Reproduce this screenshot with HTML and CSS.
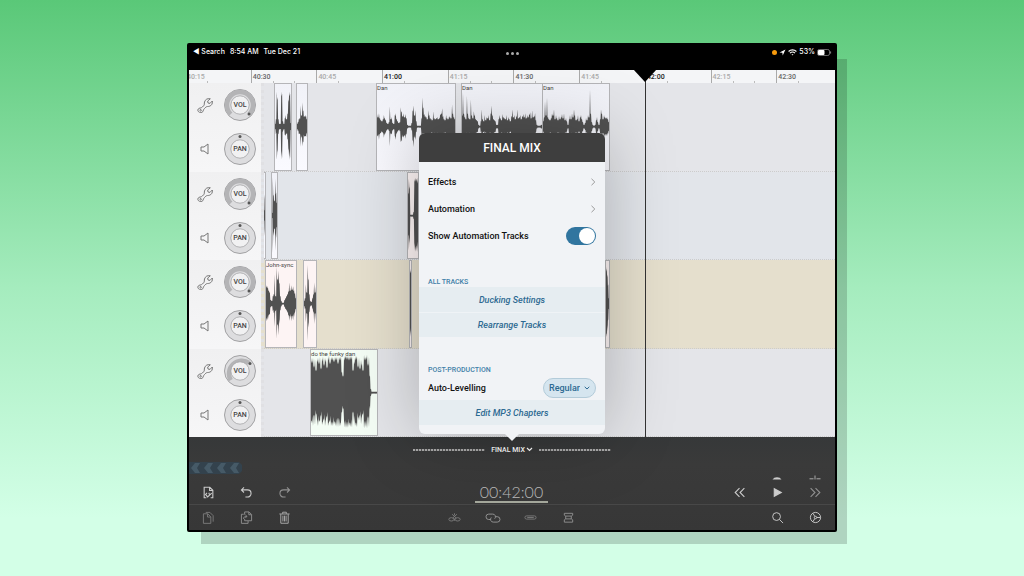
FILE: index.html
```html
<!DOCTYPE html>
<html lang="en">
<head>
<meta charset="utf-8">
<title>Final Mix</title>
<link rel="stylesheet" href="styles.css">
</head>
<body>
<svg class="sprite" aria-hidden="true">
  <symbol id="wrench" viewBox="0 0 16 16"><path d="M1.4 14.6c-1-1-.6-2.600.6-3.200 1.400-.7 2.200-.3 3.400-1.400l1.300-1.300c1-1.100.4-2.300.8-3.700C8.200 2.500 10.600 1 13.300 1.800l-2.600 2.200.3 2 2 .4 2.300-2.400c.6 2.400-.8 4.700-3 5.300-1.300.4-2.400-.1-3.500.9L7.500 11.500c-1.200 1.100-1 2.100-1.700 3.200-.9 1.200-3.200 1.100-4.400-.1zM3 13.700a.8.8 0 1 0 1-1.200.8.8 0 0 0-1 1.200z"/></symbol>
  <symbol id="speaker" viewBox="0 0 10 12"><path d="M1 4h3l4-3v10L4 8H1z"/></symbol>
  <symbol id="vol" viewBox="0 0 34 34"><circle cx="17" cy="17" r="15.500" fill="#dddddf" stroke="#a2a2a4"/><path d="M7.800 26.200A13 13 0 1 1 26.200 26.200" fill="none" stroke="#b4b4b6" stroke-width="4.500"/><circle cx="17" cy="17" r="9.200" fill="#f1f1f2" stroke="#a2a2a4" stroke-width=".8"/><circle cx="26" cy="26" r="1.500" fill="#555"/></symbol>
  <symbol id="volhigh" viewBox="0 0 34 34"><circle cx="17" cy="17" r="15.500" fill="#dddddf" stroke="#a2a2a4"/><path d="M7.800 26.200A13 13 0 0 1 26.200 8.800" fill="none" stroke="#b4b4b6" stroke-width="4.500"/><circle cx="17" cy="17" r="9.200" fill="#f1f1f2" stroke="#a2a2a4" stroke-width=".8"/><circle cx="27" cy="9.500" r="1.500" fill="#555"/></symbol>
  <symbol id="pan" viewBox="0 0 34 34"><circle cx="17" cy="17" r="15.500" fill="#dddddf" stroke="#a2a2a4"/><circle cx="17" cy="17" r="9.200" fill="#f1f1f2" stroke="#a2a2a4" stroke-width=".8"/><circle cx="17" cy="4.500" r="1.500" fill="#555"/></symbol>
  <symbol id="next" viewBox="0 0 6 8"><path d="M1.500.8 4.800 4 1.500 7.200"/></symbol>
</svg>

<main class="device">
  <header class="status">
    <div class="status-left"><span>◀ Search</span><span>8:54 AM</span><span>Tue Dec 21</span></div>
    <div class="dots"><i></i><i></i><i></i></div>
    <div class="status-right">
      <i class="mic"></i>
      <svg width="7" height="7" viewBox="0 0 7 7"><path d="M.5 3.500 6.500.5 3.700 6.500 3.400 3.800z" fill="#fff"/></svg>
      <svg width="9" height="7" viewBox="0 0 9 7" fill="none" stroke="#fff" stroke-width="1.100"><path d="M.6 2.500a5.600 5.600 0 0 1 7.800 0M2 4.200a3.600 3.600 0 0 1 5 0"/><path d="M3.500 5.200h2L4.500 6.400z" fill="#fff" stroke="none"/></svg>
      <span>53%</span>
      <svg width="15" height="7" viewBox="0 0 15 7"><rect x=".5" y=".5" width="12" height="6" rx="1.700" fill="none" stroke="#888" stroke-width=".8"/><rect x="1" y="1" width="6.500" height="5" rx="1" fill="#fff"/><path d="M13.600 2.400v2.200" stroke="#888"/></svg>
    </div>
  </header>

  <section class="editor">
    <ol class="ruler">
      <li class="light">40:15</li><li class="mid">40:30</li><li class="light">40:45</li><li class="dark">41:00</li><li class="light">41:15</li><li class="mid">41:30</li><li class="light">41:45</li><li class="dark">42:00</li><li class="light">42:15</li><li class="mid">42:30</li>
    </ol>
    <div class="tracks">
      <div class="track">
        <div class="strip">
          <button class="tool" aria-label="Track settings"><svg class="line wrench"><use href="#wrench"/></svg></button>
          <button class="knob"><svg><use href="#vol"/></svg><span>VOL</span></button>
          <button class="tool" aria-label="Mute"><svg class="line speaker"><use href="#speaker"/></svg></button>
          <button class="knob"><svg><use href="#pan"/></svg><span>PAN</span></button>
        </div>
        <div class="lane" data-track="0"></div>
      </div>
      <div class="track cool">
        <div class="strip">
          <button class="tool" aria-label="Track settings"><svg class="line wrench"><use href="#wrench"/></svg></button>
          <button class="knob"><svg><use href="#vol"/></svg><span>VOL</span></button>
          <button class="tool" aria-label="Mute"><svg class="line speaker"><use href="#speaker"/></svg></button>
          <button class="knob"><svg><use href="#pan"/></svg><span>PAN</span></button>
        </div>
        <div class="lane" data-track="1"></div>
      </div>
      <div class="track selected">
        <div class="strip">
          <button class="tool" aria-label="Track settings"><svg class="line wrench"><use href="#wrench"/></svg></button>
          <button class="knob"><svg><use href="#vol"/></svg><span>VOL</span></button>
          <button class="tool" aria-label="Mute"><svg class="line speaker"><use href="#speaker"/></svg></button>
          <button class="knob"><svg><use href="#pan"/></svg><span>PAN</span></button>
        </div>
        <div class="lane" data-track="2"></div>
      </div>
      <div class="track">
        <div class="strip">
          <button class="tool" aria-label="Track settings"><svg class="line wrench"><use href="#wrench"/></svg></button>
          <button class="knob"><svg><use href="#volhigh"/></svg><span>VOL</span></button>
          <button class="tool" aria-label="Mute"><svg class="line speaker"><use href="#speaker"/></svg></button>
          <button class="knob"><svg><use href="#pan"/></svg><span>PAN</span></button>
        </div>
        <div class="lane" data-track="3"></div>
      </div>
    </div>
    <div class="playhead"></div>

    <section class="popover" aria-label="Final mix settings">
      <h1>FINAL MIX</h1>
      <button class="row">Effects<svg class="next"><use href="#next"/></svg></button>
      <button class="row">Automation<svg class="next"><use href="#next"/></svg></button>
      <label class="row">Show Automation Tracks<input class="switch" type="checkbox" checked></label>
      <h2>ALL TRACKS</h2>
      <button class="action">Ducking Settings</button>
      <button class="action">Rearrange Tracks</button>
      <h2>POST-PRODUCTION</h2>
      <div class="row level"><label for="level">Auto-Levelling</label>
        <span class="pill"><select id="level"><option>Regular</option></select><svg width="6" height="4" viewBox="0 0 6 4"><path d="M.7.8 3 3 5.300.8" fill="none" stroke="#2d6a92"/></svg></span>
      </div>
      <button class="action">Edit MP3 Chapters</button>
    </section>
  </section>

  <footer class="console">
    <div class="mixbar">
      <i class="rail"></i>
      <button class="mixbtn">FINAL MIX<svg width="7" height="5" viewBox="0 0 7 5"><path d="M1 1l2.500 2.500L6 1" fill="none" stroke="#fff" stroke-width="1.200"/></svg></button>
      <i class="rail"></i>
    </div>
    <div class="overview">
      <svg width="54" height="12" viewBox="0 0 54 12"><path d="M0 0h50l3 3v6l-3 3H0z" fill="#33424d"/><g fill="#465a67"><path d="M6 1h5L8 6l3 5H6L2 6z"/><path d="M19 1h5l-3 5 3 5h-5l-4-5z"/><path d="M32 1h5l-3 5 3 5h-5l-4-5z"/><path d="M45 1h5l-3 5 3 5h-5l-4-5z"/></g></svg>
      <div class="peeks">
        <svg width="38" height="4" viewBox="0 0 38 4"><path d="M14.500 3.500a5 4 0 0 1 9 0z" fill="#ccc"/></svg>
        <svg width="38" height="5" viewBox="0 0 38 5"><path d="M13.500 3.800h4M19 .5v4M20.500 3.800h4" stroke="#aaa"/></svg>
      </div>
    </div>
    <div class="bar">
      <div class="group">
        <button class="icon" aria-label="Edit document"><svg viewBox="0 0 12 12"><path d="M4 10.800H2V1.200h5.200L10 4v6.800H8M7 1.400V4.200h2.800M4.600 6.300 3.300 7.800l1.900 2.300L9 6.600M6.300 6.200l.5 1.600"/></svg></button>
        <button class="icon" aria-label="Undo"><svg viewBox="0 0 12 12"><path d="M3.700 1.200 1.300 3.600 3.700 6M1.500 3.600h5.400a3.300 3.300 0 0 1 0 6.600H5"/></svg></button>
        <button class="icon dim" aria-label="Redo"><svg viewBox="0 0 12 12"><path d="M8.300 1.200l2.400 2.400L8.300 6M10.500 3.600H5.100a3.300 3.300 0 0 0 0 6.600H7"/></svg></button>
      </div>
      <output class="time">00:42:00</output>
      <div class="group">
        <button class="icon" aria-label="Rewind"><svg viewBox="0 0 12 12"><path d="M6 2 2 6l4 4M10.500 2l-4 4 4 4"/></svg></button>
        <button class="icon" aria-label="Play"><svg viewBox="0 0 12 12"><path d="M3 2.500v7L9.500 6z" fill="#ccc"/></svg></button>
        <button class="icon dim" aria-label="Forward"><svg viewBox="0 0 12 12"><path d="M1.500 2l4 4-4 4M6 2l4 4-4 4"/></svg></button>
      </div>
    </div>
    <div class="bar lower">
      <div class="group">
        <button class="icon faint" aria-label="Copy"><svg viewBox="0 0 14 14"><path d="M1.500 3h4.700L9.500 6.300V13.300h-8zM6 3.200v3.300h3.300M4 1.500h4.500L12 5v6.500"/></svg></button>
        <button class="icon dim" aria-label="Paste"><svg viewBox="0 0 14 14"><path d="M4 3.500H1.500v9.800h7.200v-2.500M5 8.500v2h7.500V3.800L9.700 1H5v3M9.500 1.200v2.800h2.800M3.800 8.500c0-2 1.200-2.700 3.500-2.700M5.800 4.200 7.500 5.800 5.800 7.500"/></svg></button>
        <button class="icon soft" aria-label="Delete"><svg viewBox="0 0 14 14"><path d="M1.500 3.200h11M5 3V1.300h4V3M3 3.400V13.200h8V3.400M5.300 5v6.300M7 5v6.300M8.700 5v6.300"/></svg></button>
      </div>
      <div class="group">
        <button class="icon faint" aria-label="Split"><svg viewBox="0 0 14 14"><ellipse cx="3.600" cy="9" rx="2.700" ry="1.800"/><ellipse cx="10.400" cy="9" rx="2.700" ry="1.800"/><path d="M5.200 7.500 9.600 3.500M8.800 7.500 4.400 3.500M7 2.500v2M7 8v2.500"/></svg></button>
        <button class="icon wide dim" aria-label="Link"><svg viewBox="0 0 16 12"><path d="M5.500 7.500H3.700a2.700 2.700 0 0 1 0-5.400h4a2.700 2.700 0 0 1 2 4.600M10.500 4.700h1.800a2.700 2.700 0 0 1 0 5.400h-4a2.700 2.700 0 0 1-2-4.600"/></svg></button>
        <button class="icon faint" aria-label="Join"><svg viewBox="0 0 14 14"><rect x="1" y="5.300" width="12" height="3.400" rx="1.700"/><path d="M3.500 7h7"/></svg></button>
        <button class="icon dim" aria-label="Trim"><svg viewBox="0 0 14 14"><path d="M2.500 2.500h9v2L10 5.500v3l1.500 1v2.500h-9V9.500l1.500-1v-3l-1.500-1zM4 5.500h6M4 8.500h6"/></svg></button>
      </div>
      <div class="group">
        <button class="icon" aria-label="Search"><svg viewBox="0 0 14 14"><circle cx="6" cy="6" r="4.200"/><path d="M9.200 9.200 13 13"/></svg></button>
        <button class="icon" aria-label="Settings"><svg viewBox="0 0 14 14"><circle cx="7" cy="7" r="5.500"/><circle cx="7" cy="7" r="1.300"/><path d="M8.300 7h4M6.300 5.900 4.200 2.500M6.300 8.100 4.200 11.500"/></svg></button>
      </div>
    </div>
  </footer>
</main>
<script src="app.js"></script>
</body>
</html>
```
FILE: styles.css
```css
* { box-sizing: border-box; }
html { min-height: 100%; background: linear-gradient(#5ac878, #a5ecbe 50%, #d3ffe7 90%); }
body {
  margin: 0;
  padding: 43px 187px 44px;
  font-family: "Roboto", "Liberation Sans", sans-serif;
}
button, select, input { font: inherit; color: inherit; border: 0; margin: 0; padding: 0; background: none; }
h1, h2, ol { margin: 0; padding: 0; }
.sprite { position: absolute; width: 0; height: 0; }
.device { border: 2px solid #000; border-radius: 2px; background: #000; box-shadow: 12px 14px 0 -2px rgba(0, 0, 0, .17); }

.status { display: grid; grid-template-columns: 1fr auto 1fr; height: 25px; padding: 2px 3px 0 4px; color: #fff; font: 500 7px/10px "Inter", sans-serif; }
.status-left { display: flex; gap: 5px; }
.status-right { display: flex; gap: 2px; justify-content: flex-end; align-items: center; height: 10px; }
.mic { width: 5px; height: 5px; border-radius: 50%; background: #f79a0c; }
.dots { display: flex; gap: 2px; padding-top: 5px; }
.dots i { width: 3px; height: 3px; border-radius: 50%; background: #aaa; }

.editor { position: relative; background: #f4f5f7; }
.ruler { display: grid; grid-template-columns: repeat(10, 1fr); height: 13px; margin: 0 -7px 0 -4px; list-style: none; font-size: 7px; line-height: 14px; font-weight: 500; clip-path: inset(0 7px 0 4px); }
.ruler li {
  padding-left: 1px;
  border-left: 1px solid #aaa;
  background: linear-gradient(90deg, transparent 33%, #bbb 33% 34%, transparent 34% 66%, #bbb 66% 67%, transparent 67%) bottom / 100% 3px no-repeat;
}
.light { color: #aaa; }
.mid { color: #666; }
.dark { color: #222; }

.tracks { display: grid; grid-template-rows: repeat(4, 1fr); min-height: 354px; }
.track { display: grid; grid-template-columns: 72px 1fr; background: #f3f3f5; }
.strip { display: grid; grid-template-columns: 32px 1fr; grid-template-rows: 1fr 1fr; align-items: center; justify-items: center; padding-right: 2px; background: linear-gradient(#f0f0f1, #f6f6f7); }
.lane { position: relative; overflow: hidden; background: #e4e5e9; border-left: 3px dotted #e0e0e3; border-bottom: 1px dotted #ccc; }
.cool .lane { background: #e2e5ea; }
.selected .lane { background: #e5dfcd; }
.tool, .knob { display: grid; place-items: center; }
.line { fill: none; stroke: #777; stroke-width: 1; }
.wrench { width: 16px; height: 16px; }
.speaker { width: 10px; height: 12px; }
.knob svg, .knob span { grid-area: 1 / 1; }
.knob svg { width: 34px; height: 34px; }
.knob { color: #444; font-size: 7px; font-weight: 500; }

.clip { position: absolute; top: 0; bottom: 0; border: 1px solid #b5b5b8; background: linear-gradient(#f1f2f8, #fafaff); }
.clip.pink { background: #fdf4f4; }
.clip.green { background: #f4fdf5; }
.clip svg { display: block; width: 100%; height: 100%; fill: #515151; }
.clip span { position: absolute; top: 0; left: 0; font-size: 6px; line-height: 7px; color: #444; white-space: nowrap; }
.playhead { position: absolute; top: 0; bottom: 0; left: calc(50% + 133px); width: 1px; background: #333; }
.playhead::before { content: ""; position: absolute; top: -1px; left: -12px; border: solid transparent; border-width: 13px 12px 0; border-top-color: #000; }

.popover { position: absolute; bottom: 3px; left: 50%; width: 186px; margin-left: -93px; padding-bottom: 9px; border-radius: 6px; background: #f1f3f6; box-shadow: 0 0 70px rgba(0, 0, 0, .25); color: #111; font-size: 9px; z-index: 2; }
.popover::after { content: ""; position: absolute; top: 100%; left: 86px; border: solid transparent; border-width: 7px 7px 0; border-top-color: #f1f3f6; }
.popover h1 { height: 29px; margin-bottom: 6px; border-radius: 6px 6px 0 0; background: #3e3e3e; color: #fff; font-size: 12px; line-height: 30px; font-weight: 500; text-align: center; }
.row { display: flex; align-items: center; justify-content: space-between; width: 100%; height: 27px; padding: 0 9px; font-weight: 500; }
.next { width: 6px; height: 8px; fill: none; stroke: #999; }
.popover h2 { padding: 28px 9px 0; color: #3f7fa8; font-size: 7px; line-height: 10px; font-weight: 500; }
.switch { appearance: none; width: 30px; height: 18px; padding: 1px; border-radius: 9px; background: #31759f; }
.switch::before { content: ""; display: block; width: 16px; height: 16px; margin-left: 12px; border-radius: 50%; background: #fff; }
.action { display: block; width: 100%; height: 25px; background: #e6edf1; color: #2d6a92; font-weight: 500; font-style: italic; }
.action + .action { border-top: 1px solid #eff3f6; }
.popover .level { height: 25px; }
.pill { display: flex; align-items: center; justify-content: center; gap: 4px; width: 53px; height: 20px; border: 1px solid #b3cbd9; border-radius: 10px; background: #d5e5ef; color: #2d6a92; }
.pill select { appearance: none; }

.console { background: linear-gradient(#363839, #3a3a3a 30%, #373737); color: #fff; }
.mixbar { display: flex; align-items: center; justify-content: center; gap: 6px; height: 25px; }
.rail { width: 72px; height: 2px; background: repeating-linear-gradient(90deg, #aaa 0 2px, #555 2px 3px); }
.mixbtn { display: flex; align-items: center; gap: 1px; font-size: 7px; font-weight: 500; }
.overview { display: flex; justify-content: space-between; height: 18px; padding-right: 1px; }
.peeks { display: flex; align-items: flex-end; }
.bar { display: grid; grid-template-columns: 1fr auto 1fr; align-items: center; height: 24px; padding-right: 1px; }
.bar.lower { height: 26px; border-top: 1px solid #484848; }
.group { display: flex; }
.group:last-child { justify-content: flex-end; }
.icon { display: grid; place-items: center; width: 38px; height: 24px; }
.icon svg { width: 13px; height: 13px; fill: none; stroke: #ccc; stroke-width: 1; }
.icon.wide svg { width: 16px; height: 12px; }
.soft { opacity: .8; }
.dim { opacity: .6; }
.faint { opacity: .45; }
.bar:not(.lower) { padding-bottom: 2px; }
.time { padding: 0 5px; border-bottom: 2px solid #a5a89c; color: #bbb; font: 300 16px/19px "Lato", sans-serif; }
```
FILE: app.js
```js
// Clip positions are in timeline units; a lane is 571 units wide.
const LANE = 571;
const HALF = 44;

const dan1 = [13,10,14,9,7,6,8,12,9,7,4,3,5,21,8,10,4,3,12,14,8,6,4,5,20,16,11,14,10,13,9,2,1,1,1,4,17,22,12,17,6,1,1,1,1,9,30,20,13,11,10,8,17,12,9,8,7,16,9,8,9,10,8,9,13,14,19,11,8,7,12,9,8,11,10,9,23,14,10,8];
const dan2 = [12,35,14,10,8,32,14,9,8,28,12,9,16,12,8,7,6,2,1,6,18,8,6,12,7,10,9,12,7,14,22,12,8,7,6,2,2,8,12,9,7,13,10,9,8,12,7,10,8,6,11,18,10,12,8,11,18,9,10,12,8,11,13,10,14,9,12,10,13,15,9,17,10,11,14,7,2,1,1,1,2,2];
const dan3 = [6,10,26,12,30,10,8,7,9,14,12,18,8,12,9,7,11,8,10,13,9,14,7,9,6,2,8,12,8,14,10,18,12,7,8,12,6,10,12,8,5,2,4,9,7,12,10,38,14,5,2,1,2,7,10,5,2,8,18,14,8,12,10,9,10,8,5];
const john = [18,19,17,14,12,4,3,8,10,30,8,38,26,34,22,8,3,1,1,4,6,8,10,13,22,14,19,15,18,14,11,6];
const funky = [36,33,36,28,35,24,34,36,32,37,26,35,37,30,36,34,27,36,38,32,36,37,36,34,37,36,37,32,37,36,38,22,18,36,38,38,37,38,36,38,37,38,24,32,36,38,37,28,36,26,34,30,24,39,36,37,39,30,37,18,4,1,1,1,1,1,1];

const tracks = [
  [
    { x: 10, w: 18, wave: [3,8,36,30,8,3,3,36,34,6,3,9,12,8,14,28,36,34,4] },
    { x: 32, w: 12, wave: [3,5,8,9,22,12,25,17,11,12,11,8] },
    { x: 112, w: 80, wave: dan1, label: "Dan" },
    { x: 197, w: 82, wave: dan2, label: "Dan" },
    { x: 278, w: 68, wave: dan3, label: "Dan" }
  ],
  [
    { x: -2, w: 4, wave: [4,18,22,6] },
    { x: 7, w: 7, wave: [3,40,22,16,38,24,14] },
    { x: 143, w: 12, kind: "pink", wave: [24,38,30,1,1,1,4,38,39,38,39,36] }
  ],
  [
    { x: 1, w: 32, kind: "pink", wave: john, label: "John-sync" },
    { x: 39, w: 14, kind: "pink", wave: [3,6,20,12,40,26,10,3,2,6,10,22,12,18] },
    { x: 145, w: 3, kind: "pink", wave: [34,36,34] },
    { x: 341, w: 5, kind: "pink", wave: [38,36,30,20,6] }
  ],
  [
    { x: 46, w: 68, kind: "green", wave: funky, label: "do the funky dan" }
  ]
];

// A dip between neighbouring samples keeps single peaks narrow.
function sharpen(wave) {
  return wave.flatMap((v, i) => i ? [Math.min(wave[i - 1], v) * 0.92, v] : [v]);
}

function outline(samples) {
  const wave = sharpen(samples);
  const step = 100 / (wave.length - 1);
  const top = wave.map((v, i) => `${i * step},${HALF - v}`);
  const bottom = wave.map((v, i) => `${i * step},${HALF + v * (i % 3 ? 0.95 : 0.8)}`).reverse();
  return top.concat(bottom).join(" ");
}

document.querySelectorAll(".lane").forEach(lane => {
  tracks[lane.dataset.track].forEach(clip => {
    const el = document.createElement("div");
    el.className = "clip " + (clip.kind || "");
    el.style.left = clip.x / LANE * 100 + "%";
    el.style.width = clip.w / LANE * 100 + "%";
    el.innerHTML = `<svg viewBox="0 0 100 88" preserveAspectRatio="none"><polygon points="${outline(clip.wave)}"/></svg>`;
    if (clip.label) {
      const name = document.createElement("span");
      name.textContent = clip.label;
      el.append(name);
    }
    lane.append(el);
  });
});
```
